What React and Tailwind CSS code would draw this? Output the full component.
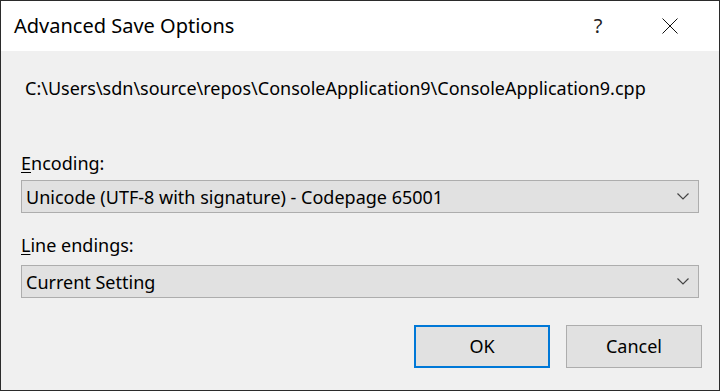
import React from 'react';

const font = { fontFamily: '"Segoe UI", "Noto Sans", "Open Sans", sans-serif' };

function Chevron() {
  return (
    <svg width="12" height="7" viewBox="0 0 12 7" className="shrink-0">
      <path d="M0.5 0.5 L6 6 L11.5 0.5" fill="none" stroke="#444" strokeWidth="1.2" />
    </svg>
  );
}

function Combo({ value }) {
  return (
    <div className="mx-5 h-[33px] flex items-center justify-between bg-[#e1e1e1] border border-[#adadad] pl-[4px] pr-[9px]">
      <span className="text-[18px] leading-[24px] text-black">{value}</span>
      <Chevron />
    </div>
  );
}

export default function App() {
  return (
    <div className="w-[720px] h-[391px] bg-[#2b2b2b] p-px flex flex-col text-black" style={font}>
      {/* Title bar */}
      <div className="h-[50px] bg-white flex items-center justify-between shrink-0">
        <span className="pl-[13px] text-[20px] text-black">Advanced Save Options</span>
        <div className="flex items-center h-full">
          <div className="w-[46px] h-full flex items-center justify-center text-[20px] text-[#222]">?</div>
          <div className="w-[98px] h-full flex items-center justify-center">
            <svg width="16" height="16" viewBox="0 0 16 16">
              <path d="M0.5 0.5 L15.5 15.5 M15.5 0.5 L0.5 15.5" stroke="#111" strokeWidth="1" fill="none" />
            </svg>
          </div>
        </div>
      </div>

      {/* Body */}
      <div className="flex-1 bg-[#f0f0f0] flex flex-col">
        <div className="pl-6 pt-[25px] text-[18px] leading-[24px]">
          C:\Users\sdn\source\repos\ConsoleApplication9\ConsoleApplication9.cpp
        </div>

        <div className="pl-5 pt-[51px] pb-[5px] text-[18px] leading-[24px]">
          <span className="underline underline-offset-2">E</span>ncoding:
        </div>
        <Combo value="Unicode (UTF-8 with signature) - Codepage 65001" />

        <div className="pl-5 pt-[20px] pb-[8px] text-[18px] leading-[24px]">
          <span className="underline underline-offset-2">L</span>ine endings:
        </div>
        <Combo value="Current Setting" />

        <div className="flex justify-end gap-4 pr-[17px] pt-[27px]">
          <button className="w-[136px] h-[43px] bg-[#e1e1e1] border-2 border-[#0078d7] text-[18px]">OK</button>
          <button className="w-[136px] h-[43px] bg-[#e1e1e1] border border-[#adadad] text-[18px]">Cancel</button>
        </div>
      </div>
    </div>
  );
}
